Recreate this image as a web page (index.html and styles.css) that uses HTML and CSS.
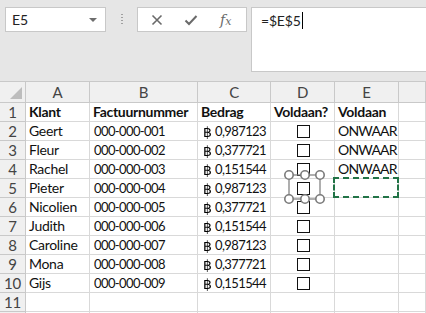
FILE: index.html
```html
<!DOCTYPE html>
<html lang="nl">
<head>
  <meta charset="UTF-8">
  <title>Facturen</title>
  <link rel="stylesheet" href="styles.css">
</head>
<body>
  <div class="toolbar">
    <div class="name-box">
      <span>E5</span>
      <span class="drop"></span>
    </div>
    <div class="grip"></div>
    <div class="func-box">
      <svg class="ico" width="12" height="12" viewBox="0 0 12 12"><path d="M1.5 1.5 L10.5 10.5 M10.5 1.5 L1.5 10.5" stroke="#6a6a6a" stroke-width="1.6" fill="none"/></svg>
      <svg class="ico" width="14" height="12" viewBox="0 0 14 12"><path d="M1.5 6.5 L5 10 L12.5 2" stroke="#6a6a6a" stroke-width="2" fill="none"/></svg>
      <span class="fx">f<small>x</small></span>
    </div>
    <div class="formula">=$E$5<span class="caret"></span></div>
  </div>

  <div class="sheet">
    <div class="grid" id="grid">
      <div class="hd corner"><span class="tri"></span></div>
      <div class="hd">A</div>
      <div class="hd">B</div>
      <div class="hd">C</div>
      <div class="hd">D</div>
      <div class="hd">E</div>
      <div class="hd"></div>
    </div>

    <svg class="handles" width="42" height="36" viewBox="0 0 42 36">
      <rect x="5" y="5" width="31" height="24" fill="none" stroke="#7a7a7a" stroke-width="1.2"/>
      <g fill="#fff" stroke="#7a7a7a" stroke-width="1.6">
        <circle cx="5" cy="5" r="4.2"/>
        <circle cx="21" cy="5" r="4.2"/>
        <circle cx="36" cy="5" r="4.2"/>
        <circle cx="5" cy="29" r="4.2"/>
        <circle cx="21" cy="29" r="4.2"/>
        <circle cx="36" cy="29" r="4.2"/>
      </g>
    </svg>
  </div>

  <script>
    const rows = [
      ["Geert", "000-000-001", "0,987123", "ONWAAR"],
      ["Fleur", "000-000-002", "0,377721", "ONWAAR"],
      ["Rachel", "000-000-003", "0,151544", "ONWAAR"],
      ["Pieter", "000-000-004", "0,987123", ""],
      ["Nicolien", "000-000-005", "0,377721", ""],
      ["Judith", "000-000-006", "0,151544", ""],
      ["Caroline", "000-000-007", "0,987123", ""],
      ["Mona", "000-000-008", "0,377721", ""],
      ["Gijs", "000-000-009", "0,151544", ""]
    ];
    const grid = document.getElementById("grid");
    let html = `<div class="rh">1</div><div class="c b">Klant</div><div class="c b">Factuurnummer</div>
      <div class="c b">Bedrag</div><div class="c b">Voldaan?</div><div class="c b">Voldaan</div><div class="c"></div>`;
    rows.forEach((r, i) => {
      const copy = i === 3 ? " copy" : "";
      html += `<div class="rh">${i + 2}</div><div class="c">${r[0]}</div><div class="c id">${r[1]}</div>
        <div class="c money"><span class="baht">&#3647;</span><span class="amount">${r[2]}</span></div>
        <div class="c mid"><span class="box"></span></div>
        <div class="c bool${copy}">${r[3]}</div><div class="c"></div>`;
    });
    html += `<div class="rh">11</div>` + '<div class="c"></div>'.repeat(6);
    html += `<div class="rh"></div>` + '<div class="c"></div>'.repeat(6);
    grid.insertAdjacentHTML("beforeend", html);
  </script>
</body>
</html>
```

FILE: styles.css
```css
body { margin: 0; background: #fff; font-family: Lato, "Open Sans", sans-serif; color: #111; overflow: hidden; height: 313px; }

.toolbar { height: 81px; background: #e6e6e6; display: flex; align-items: flex-start; padding-top: 7px; box-sizing: border-box; }
.name-box { margin-left: 5px; width: 101px; height: 25px; box-sizing: border-box; border: 1px solid #c8c8c8; background: #fff; display: flex; align-items: center; justify-content: space-between; padding: 0 8px 0 6px; font-size: 14px; color: #222; }
.drop { width: 0; height: 0; border-left: 4px solid transparent; border-right: 4px solid transparent; border-top: 4px solid #6d6d6d; }
.grip { width: 2px; height: 12px; margin: 7px 14px 0 15px; background: repeating-linear-gradient(#a0a0a0 0 1px, transparent 1px 3px); }
.func-box { width: 110px; height: 25px; box-sizing: border-box; border: 1px solid #c8c8c8; background: #fff; display: flex; align-items: center; gap: 21px; padding: 0 0 0 13px; }
.fx { font-family: "DejaVu Serif", serif; font-style: italic; font-size: 14px; color: #6a6a6a; margin-left: 1px; }
.fx small { font-size: 11px; }
.formula { margin-left: 4px; flex: 1; height: 65px; box-sizing: border-box; border: 1px solid #c8c8c8; border-right: none; background: #fff; padding: 4px 9px; font-size: 14px; letter-spacing: -0.2px; color: #222; line-height: 18px; }
.caret { display: inline-block; width: 1px; height: 17px; background: #000; vertical-align: -3px; margin-left: 1px; }

.sheet { position: relative; }
.grid { display: grid; grid-template-columns: 26px 64px 108px 73px 64px 64px 1fr; grid-template-rows: 22px; grid-auto-rows: 19px; font-size: 14px; letter-spacing: -0.3px; }
.grid > div { box-sizing: border-box; border-right: 1px solid #d9d9d9; border-bottom: 1px solid #d9d9d9; white-space: nowrap; overflow: hidden; }
.hd { background: #f0f0f0; color: #444; text-align: center; line-height: 21px; border-color: #c9c9c9 !important; border-top: 1px solid #d0d0d0; font-size: 15px; }
.corner { position: relative; }
.tri { position: absolute; right: 3px; bottom: 3px; width: 0; height: 0; border-left: 12px solid transparent; border-bottom: 12px solid #bdbdbd; }
.grid > .rh { background: #f0f0f0; color: #444; text-align: center; line-height: 18px; border-color: #c9c9c9; font-size: 15px; }
.c { padding: 0 3px; line-height: 18px; }
.grid > .id { font-size: 13px; letter-spacing: -0.6px; padding-left: 4px; }
.grid > .bool { letter-spacing: -0.8px; }
.b { font-weight: bold; }
.money { display: flex; padding: 0 4px 0 5px; }
.baht { font-family: "Noto Sans CJK SC", "DejaVu Sans", sans-serif; font-size: 14px; letter-spacing: 0; color: #000; filter: grayscale(1) brightness(0.4); }
.amount { margin-left: auto; font-size: 13px; letter-spacing: -0.6px; }
.mid { display: flex; align-items: center; justify-content: center; }
.box { width: 13px; height: 13px; box-sizing: border-box; border: 1px solid #111; margin-left: 1px; }
.grid > .copy { overflow: visible; position: relative; }
.copy::after { content: ""; position: absolute; left: -2px; top: -2px; right: -1px; bottom: -1px; border: 2px dashed #217346; }

.handles { position: absolute; left: 284px; top: 89px; }
```
